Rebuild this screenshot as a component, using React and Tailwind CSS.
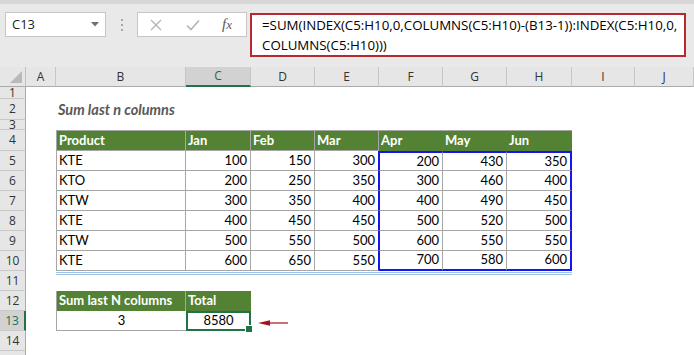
import React from 'react';

const W = ['w-[30px]', 'w-[130px]', 'w-[65px]', 'w-[64px]', 'w-[64px]', 'w-[64px]', 'w-[64px]', 'w-[65px]', 'w-[63px]', 'flex-1'];
const LETTERS = ['A', 'B', 'C', 'D', 'E', 'F', 'G', 'H', 'I', 'J'];

const data = [
  ['KTE', 100, 150, 300, 200, 430, 350],
  ['KTO', 200, 250, 350, 300, 460, 400],
  ['KTW', 300, 350, 400, 400, 490, 450],
  ['KTE', 400, 450, 450, 500, 520, 500],
  ['KTW', 500, 550, 500, 600, 550, 550],
  ['KTE', 600, 650, 550, 700, 580, 600],
];

function cell(i, cls = '', content = null) {
  return (
    <div key={i} className={`${W[i]} shrink-0 h-full box-border flex items-center whitespace-nowrap ${cls}`}>
      {content}
    </div>
  );
}

function Row({ label, h, active, cells }) {
  return (
    <div className={`flex ${h}`}>
      <div
        className={`w-[26px] shrink-0 h-full box-border border-b border-b-[#c8c8c8] flex items-center justify-center overflow-hidden font-['Open_Sans'] text-[12px] ${
          active
            ? 'bg-[#d2d2d2] border-r-2 border-r-[#217346] text-[#217346]'
            : 'bg-[#e6e6e6] border-r border-r-[#ababab] text-[#333333]'
        }`}
      >
        {label}
      </div>
      {cells}
    </div>
  );
}

function emptyCells() {
  return LETTERS.map((_, i) => cell(i));
}

export default function App() {
  const hdr = 'bg-[#548235] text-white font-bold pl-[2px]';
  return (
    <div className="w-[694px] h-[355px] overflow-hidden bg-white font-['Lato'] text-[13px] text-black">
      {/* Toolbar */}
      <div className="h-[67px] bg-[#e9e9e9]">
        <div className="h-[4px] bg-[#d6d6d6]" />
        <div className="flex items-start pt-[8px]">
          <div className="ml-[5px] w-[101px] h-[25px] box-border bg-white border border-[#c6c6c6] flex items-center pl-[6px] pr-[6px] font-['Open_Sans'] text-[13px] text-[#222222]">
            <span>C13</span>
            <svg className="ml-auto" width="8" height="5" viewBox="0 0 8 5">
              <polygon points="0,0 8,0 4,4.5" fill="#707070" />
            </svg>
          </div>
          <div className="w-[31px] h-[25px] flex flex-col items-center justify-center gap-[3px]">
            <span className="w-[2px] h-[2px] bg-[#a8a8a8]" />
            <span className="w-[2px] h-[2px] bg-[#a8a8a8]" />
            <span className="w-[2px] h-[2px] bg-[#a8a8a8]" />
          </div>
          <div className="w-[110px] h-[25px] box-border bg-white border border-[#c6c6c6] flex items-center">
            <svg className="ml-[12px]" width="12" height="12" viewBox="0 0 12 12">
              <path d="M1 1 L11 11 M11 1 L1 11" stroke="#b4b4b4" strokeWidth="1.3" fill="none" />
            </svg>
            <svg className="ml-[24px]" width="14" height="12" viewBox="0 0 14 12">
              <path d="M1 6.5 L5 10.5 L13 1.5" stroke="#b4b4b4" strokeWidth="1.6" fill="none" />
            </svg>
            <span className="ml-[22px] font-['Liberation_Serif'] italic text-[15px] text-[#5a5a5a] leading-none">
              f<span className="text-[13px]">x</span>
            </span>
          </div>
          <div className="ml-[3px] mt-[1px] w-[436px] h-[44px] box-border bg-white border-2 border-[#b42a2f] pl-[10px] font-['Open_Sans'] text-[13.3px] leading-[20px] text-black">
            <div>=SUM(INDEX(C5:H10,0,COLUMNS(C5:H10)-(B13-1)):INDEX(C5:H10,0,</div>
            <div>COLUMNS(C5:H10)))</div>
          </div>
        </div>
      </div>

      {/* Column headers */}
      <div className="flex h-[20px] bg-[#e6e6e6] font-['Open_Sans'] text-[12px]">
        <div className="w-[26px] shrink-0 h-full box-border border-r border-b border-r-[#c0c0c0] border-b-[#ababab] flex items-end justify-end pr-[3px] pb-[3px]">
          <svg width="12" height="12" viewBox="0 0 12 12">
            <polygon points="12,0 12,12 0,12" fill="#b9b9b9" />
          </svg>
        </div>
        {LETTERS.map((l, i) => (
          <div
            key={l}
            className={`${W[i]} shrink-0 h-full box-border flex items-center justify-center border-r border-r-[#c6c6c6] ${
              l === 'C'
                ? 'bg-[#d2d2d2] border-b-2 border-b-[#217346] text-[#1e6b41]'
                : 'border-b border-b-[#ababab] text-[#333333]'
            }`}
          >
            {l}
          </div>
        ))}
      </div>

      {/* Rows */}
      <Row label="1" h="h-[12px]" cells={emptyCells()} />
      <Row
        label="2"
        h="h-[21px]"
        cells={LETTERS.map((_, i) =>
          i === 1
            ? cell(1, 'pl-[2px] font-bold italic text-[14.5px] text-[#595959]', 'Sum last n columns')
            : cell(i)
        )}
      />
      <Row label="3" h="h-[10px]" cells={emptyCells()} />
      <Row
        label="4"
        h="h-[21px]"
        cells={[
          cell(0),
          cell(1, `border border-[#a6a6a6] ${hdr}`, 'Product'),
          cell(2, `border-t border-r border-b border-[#a6a6a6] ${hdr}`, 'Jan'),
          cell(3, `border-t border-r border-b border-[#a6a6a6] ${hdr}`, 'Feb'),
          cell(4, `border-t border-r border-b border-[#a6a6a6] ${hdr}`, 'Mar'),
          cell(5, `border-t border-[#a6a6a6] ${hdr}`, 'Apr'),
          cell(6, `border-t border-[#a6a6a6] ${hdr}`, 'May'),
          cell(7, `border-t border-[#a6a6a6] ${hdr}`, 'Jun'),
          cell(8),
          cell(9),
        ]}
      />
      {data.map((row, k) => {
        const first = k === 0;
        const last = k === data.length - 1;
        const blueTop = first ? 'border-t-2 border-t-[#1515ee]' : '';
        const bottom = last ? 'border-b-2 border-b-[#1515ee]' : 'border-b border-b-[#a6a6a6]';
        const num = 'justify-end pr-[3px]';
        return (
          <Row
            key={k}
            label={String(k + 5)}
            h="h-[20px]"
            cells={[
              cell(0),
              cell(1, 'border-l border-r border-b border-[#a6a6a6] pl-[2px]', row[0]),
              cell(2, `border-r border-b border-[#a6a6a6] ${num}`, row[1]),
              cell(3, `border-r border-b border-[#a6a6a6] ${num}`, row[2]),
              cell(4, `border-r border-b border-r-[#1515ee] border-b-[#a6a6a6] ${num}`, row[3]),
              cell(5, `border-l border-r border-l-[#1515ee] border-r-[#a6a6a6] ${bottom} ${blueTop} ${num}`, row[4]),
              cell(6, `border-r border-r-[#a6a6a6] ${bottom} ${blueTop} ${num}`, row[5]),
              cell(7, `border-r-2 border-r-[#1515ee] ${bottom} ${blueTop} ${num}`, row[6]),
              cell(8),
              cell(9),
            ]}
          />
        );
      })}
      <Row
        label="11"
        h="h-[20px]"
        cells={LETTERS.map((_, i) =>
          i >= 1 && i <= 7
            ? cell(i, 'items-start pt-[1px]', <div className="w-full h-[3px] box-border border-t border-b border-[#9dc3e6]" />)
            : cell(i)
        )}
      />
      <Row
        label="12"
        h="h-[20px]"
        cells={[
          cell(0),
          cell(1, `border-l border-r border-[#a6a6a6] ${hdr}`, 'Sum last N columns'),
          cell(2, hdr, 'Total'),
          ...[3, 4, 5, 6, 7, 8, 9].map((i) => cell(i)),
        ]}
      />
      <Row
        label="13"
        h="h-[20px]"
        active
        cells={[
          cell(0),
          cell(1, 'border-l border-b border-[#a6a6a6] justify-center', '3'),
          cell(
            2,
            'border-2 border-[#217346] justify-center relative',
            <>
              <span>8580</span>
              <span className="absolute right-[-4px] bottom-[-4px] w-[6px] h-[6px] bg-[#217346] border border-white box-content" />
            </>
          ),
          cell(
            3,
            'items-start pl-[7px] pt-[7px]',
            <svg width="31" height="10" viewBox="0 0 31 10">
              <polygon points="0,5 12,2.2 12,7.8" fill="#a3141c" />
              <line x1="10" y1="5" x2="30" y2="5" stroke="#a3141c" strokeWidth="1.2" />
            </svg>
          ),
          ...[4, 5, 6, 7, 8, 9].map((i) => cell(i)),
        ]}
      />
      <Row label="14" h="h-[20px]" cells={emptyCells()} />
      <Row label="15" h="h-[20px]" cells={emptyCells()} />
    </div>
  );
}
